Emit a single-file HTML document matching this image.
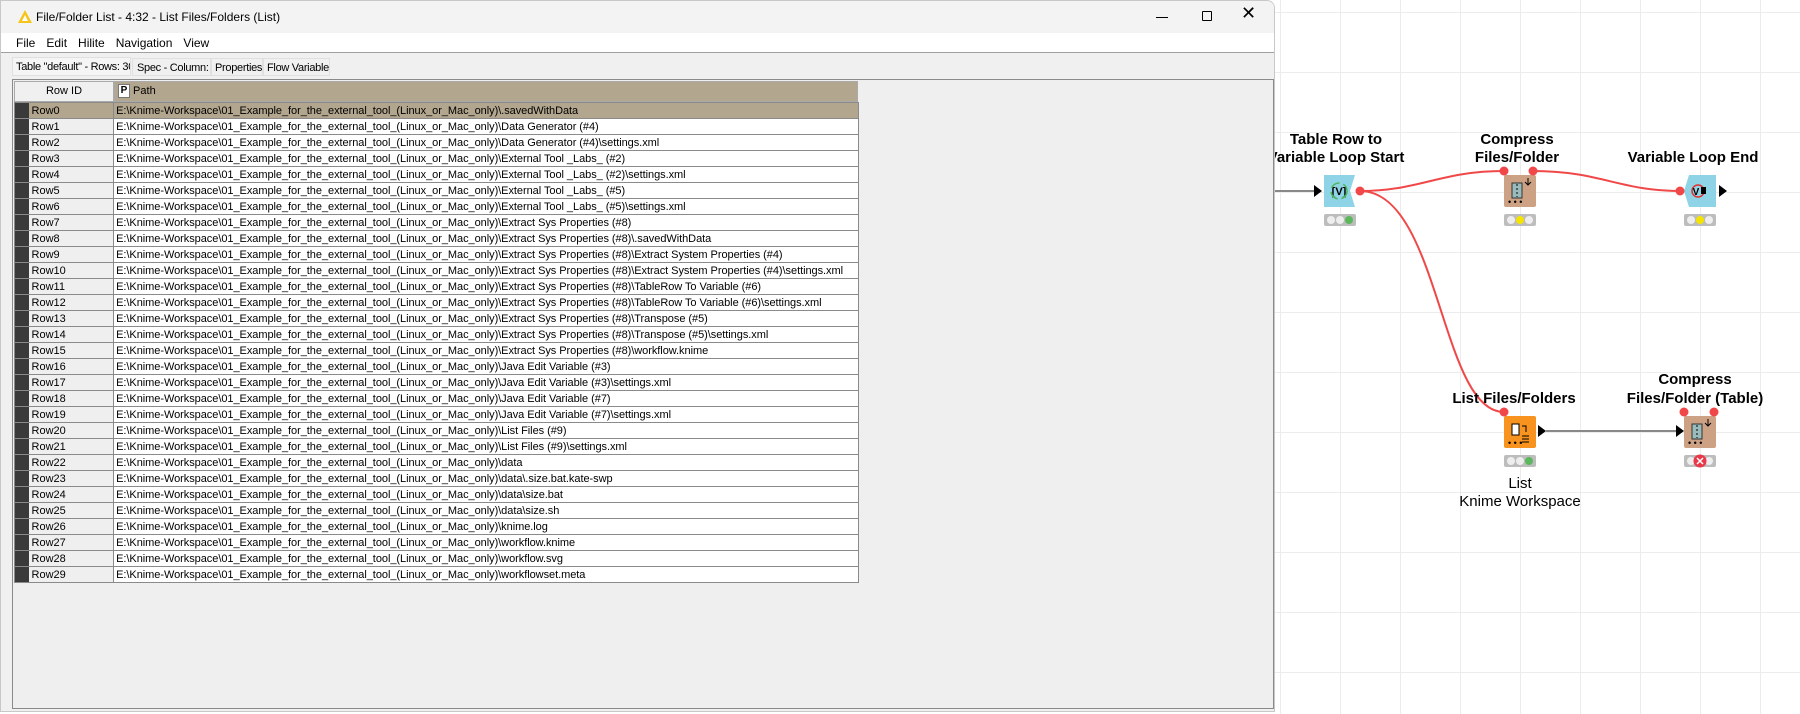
<!DOCTYPE html>
<html><head><meta charset="utf-8"><style>
*{margin:0;padding:0;box-sizing:border-box}
body{width:1800px;height:714px;position:relative;overflow:hidden;background:#fff;font-family:"Liberation Sans",sans-serif}
.abs{position:absolute}
#win{left:0;top:0;width:1275px;height:712px;background:#f0f0f0;border:1px solid #c8c8c8;border-radius:0 8px 0 0;overflow:hidden}
.menu span{margin-right:11px}
.tab{position:absolute;top:57px;height:18px;font-size:11px;line-height:18px;padding-left:4px;border:1px solid #e0e0e0;background:#f0f0f0;white-space:nowrap;overflow:hidden;letter-spacing:-0.3px}
table{border-collapse:collapse;font-size:11px;table-layout:fixed}
td{height:16px;border:1px solid #8a8a8a;padding:0 0 0 2px;white-space:nowrap;overflow:hidden;line-height:14px}
td.p{letter-spacing:-0.05px}
td.s{width:14px;background:#3a3a3a;border-right:none}
td.i{width:85px;background:#efefef;border-left:none;padding-left:3px}
td.p{width:744px;background:#fff}
tr.sel td.i,tr.sel td.p{background:#b3a68e}
.lbl{position:absolute;font-weight:bold;font-size:15px;text-align:center;white-space:nowrap;color:#000;line-height:18px}
</style></head><body>
<svg class="abs" style="left:0;top:0" width="1800" height="714">
<g stroke="#ececec" stroke-width="1">
<line x1="1280.5" y1="0" x2="1280.5" y2="714"/><line x1="1340.5" y1="0" x2="1340.5" y2="714"/><line x1="1400.5" y1="0" x2="1400.5" y2="714"/><line x1="1460.5" y1="0" x2="1460.5" y2="714"/><line x1="1520.5" y1="0" x2="1520.5" y2="714"/><line x1="1580.5" y1="0" x2="1580.5" y2="714"/><line x1="1640.5" y1="0" x2="1640.5" y2="714"/><line x1="1700.5" y1="0" x2="1700.5" y2="714"/><line x1="1760.5" y1="0" x2="1760.5" y2="714"/>
<line x1="0" y1="12.5" x2="1800" y2="12.5"/><line x1="0" y1="72.5" x2="1800" y2="72.5"/><line x1="0" y1="132.5" x2="1800" y2="132.5"/><line x1="0" y1="192.5" x2="1800" y2="192.5"/><line x1="0" y1="252.5" x2="1800" y2="252.5"/><line x1="0" y1="312.5" x2="1800" y2="312.5"/><line x1="0" y1="372.5" x2="1800" y2="372.5"/><line x1="0" y1="432.5" x2="1800" y2="432.5"/><line x1="0" y1="492.5" x2="1800" y2="492.5"/><line x1="0" y1="552.5" x2="1800" y2="552.5"/><line x1="0" y1="612.5" x2="1800" y2="612.5"/><line x1="0" y1="672.5" x2="1800" y2="672.5"/>
</g>
<line x1="1270" y1="191" x2="1316" y2="191" stroke="#888" stroke-width="2"/>
<polygon points="1314,185 1322,191 1314,197" fill="#000"/>
<path d="M1324,175 H1355 L1350,191 L1355,207 H1324 Z" fill="#8ed4e6"/>
<text x="1339" y="195" font-size="11" font-weight="bold" text-anchor="middle" font-family="Liberation Sans">[V]</text>
<circle cx="1339" cy="191" r="8" fill="none" stroke="#4cb85a" stroke-width="1.5" stroke-dasharray="10 4"/>
<rect x="1324" y="214" width="32" height="12" rx="2" fill="#bdbdbd"/><circle cx="1331" cy="220" r="4" fill="#eee"/><circle cx="1340" cy="220" r="4" fill="#eee"/><circle cx="1349" cy="220" r="4" fill="#5cb85c"/>
<g fill="none" stroke="#f04848" stroke-width="2">
<path d="M1360,191 C1420,191 1440,171 1504,171"/>
<path d="M1360,191 C1440,191 1440,412 1504,412"/>
<path d="M1533,171 C1600,171 1620,191 1680,191"/>
</g>
<circle cx="1360" cy="191" r="4.5" fill="#f04848"/>
<rect x="1504" y="175" width="32" height="32" rx="2" fill="#cda184"/>
<rect x="1512" y="183" width="10" height="15" fill="#9bb" stroke="#333" stroke-width="1"/><path d="M1517,184 v13" stroke="#000" stroke-dasharray="2 2"/><path d="M1528,178 v7 M1525,182 l3,3 3,-3" stroke="#000" fill="none"/>
<text x="1508" y="205" font-size="9" fill="#000">• • •</text>
<circle cx="1504" cy="171" r="4.5" fill="#f04848"/><circle cx="1533" cy="171" r="4.5" fill="#f04848"/>
<rect x="1504" y="214" width="32" height="12" rx="2" fill="#bdbdbd"/><circle cx="1511" cy="220" r="4" fill="#eee"/><circle cx="1520" cy="220" r="4" fill="#f5e400"/><circle cx="1529" cy="220" r="4" fill="#eee"/>
<path d="M1689,175 H1716 V207 H1689 L1684,191 Z" fill="#8ed4e6"/>
<circle cx="1698" cy="191" r="6" fill="none" stroke="#e03030" stroke-width="1.5"/><text x="1696" y="195" font-size="10" font-weight="bold" text-anchor="middle">V</text><rect x="1701" y="187" width="5" height="7" fill="#000"/>
<circle cx="1680" cy="191" r="4.5" fill="#f04848"/>
<polygon points="1719,185 1727,191 1719,197" fill="#000"/>
<rect x="1684" y="214" width="32" height="12" rx="2" fill="#bdbdbd"/><circle cx="1691" cy="220" r="4" fill="#eee"/><circle cx="1700" cy="220" r="4" fill="#f5e400"/><circle cx="1709" cy="220" r="4" fill="#eee"/>
<rect x="1504" y="416" width="32" height="32" rx="2" fill="#f7931e"/>
<rect x="1512" y="424" width="7" height="11" fill="#fff" stroke="#000"/><path d="M1522,426 h4 v6 M1522,436 h7 M1522,439 h7 M1522,442 h7" stroke="#000" fill="none"/>
<text x="1508" y="446" font-size="9">• • •</text>
<circle cx="1504" cy="412" r="4.5" fill="#f04848"/>
<polygon points="1538,425 1546,431 1538,437" fill="#000"/>
<line x1="1546" y1="431" x2="1678" y2="431" stroke="#888" stroke-width="2"/>
<polygon points="1676,425 1684,431 1676,437" fill="#000"/>
<rect x="1504" y="455" width="32" height="12" rx="2" fill="#bdbdbd"/><circle cx="1511" cy="461" r="4" fill="#eee"/><circle cx="1520" cy="461" r="4" fill="#eee"/><circle cx="1529" cy="461" r="4" fill="#5cb85c"/>
<rect x="1684" y="416" width="32" height="32" rx="2" fill="#cda184"/>
<rect x="1692" y="424" width="10" height="15" fill="#9bb" stroke="#333"/><path d="M1697,425 v13" stroke="#000" stroke-dasharray="2 2"/><path d="M1708,419 v7 M1705,423 l3,3 3,-3" stroke="#000" fill="none"/>
<text x="1688" y="446" font-size="9">• • •</text>
<circle cx="1684" cy="412" r="4.5" fill="#f04848"/><circle cx="1714" cy="412" r="4.5" fill="#f04848"/>
<rect x="1684" y="455" width="32" height="12" rx="2" fill="#bdbdbd"/><circle cx="1691" cy="461" r="4" fill="#eee"/><circle cx="1709" cy="461" r="4" fill="#eee"/>
<circle cx="1700" cy="461" r="6.5" fill="#e8384a"/><path d="M1697,458 l6,6 M1703,458 l-6,6" stroke="#fff" stroke-width="1.5"/>
</svg>
<div class="lbl" style="left:1276px;top:131px;width:120px">Table Row to</div>
<div class="lbl" style="left:1246px;top:149px;width:180px">Variable Loop Start</div>
<div class="lbl" style="left:1457px;top:131px;width:120px">Compress</div>
<div class="lbl" style="left:1457px;top:149px;width:120px">Files/Folder</div>
<div class="lbl" style="left:1613px;top:149px;width:160px">Variable Loop End</div>
<div class="lbl" style="left:1444px;top:390px;width:140px">List Files/Folders</div>
<div class="lbl" style="left:1620px;top:371px;width:150px">Compress</div>
<div class="lbl" style="left:1610px;top:390px;width:170px">Files/Folder (Table)</div>
<div class="abs" style="left:1440px;top:475px;width:160px;text-align:center;font-size:15px;line-height:18px">List<br>Knime Workspace</div>

<div id="win" class="abs">
 <div class="abs" style="left:0;top:0;width:1275px;height:32px;background:#f3f3f3"></div>
 <svg class="abs" style="left:16px;top:8px" width="16" height="15"><polygon points="8,1 15,14 1,14" fill="#f5c518"/><polygon points="8,6 11,12 5,12" fill="#fff"/></svg>
 <div class="abs" style="left:35px;top:9px;font-size:12px">File/Folder List - 4:32 - List Files/Folders (List)</div>
 <div class="abs" style="left:1155px;top:16px;width:12px;height:1px;background:#000"></div>
 <div class="abs" style="left:1201px;top:10px;width:10px;height:10px;border:1px solid #000;border-radius:1px"></div>
 <div class="abs" style="left:1240px;top:2px;font-size:18px;font-weight:300">✕</div>
 <div class="abs menu" style="left:0;top:32px;width:1275px;height:20px;background:#fff;border-bottom:1px solid #a0a0a0;font-size:12px;line-height:20px;padding-left:15px"><span>File</span><span>Edit</span><span>Hilite</span><span>Navigation</span><span>View</span></div>
 <div class="tab" style="left:11px;width:119px;top:56px;height:19px;background:#f5f5f5;padding-left:3px">Table "default" - Rows: 30</div>
 <div class="tab" style="left:131px;width:79px">Spec - Column: 1</div>
 <div class="tab" style="left:210px;width:52px;padding-left:3px">Properties</div>
 <div class="tab" style="left:262px;width:67px;padding-left:3px">Flow Variables</div>
 <div class="abs" style="left:11px;top:78px;width:1262px;height:630px;border:1px solid #8a8a8a;background:#efefef"></div>
 <div class="abs" style="left:13px;top:80px;width:100px;height:21px;background:#f0f0f0;border:1px solid #aaa;font-size:11px;text-align:center;line-height:19px">Row ID</div>
 <div class="abs" style="left:113px;top:80px;width:744px;height:21px;background:#b3a68e;border:1px solid #aaa;font-size:11px;line-height:19px;padding-left:3px"><span style="display:inline-block;width:12px;height:14px;background:#fff;border:1px solid #777;font-weight:bold;text-align:center;line-height:12px;font-size:10px;vertical-align:middle">P</span> Path</div>
 <table class="abs" style="left:13px;top:101px;width:845px">
<tr class="sel"><td class="s"></td><td class="i">Row0</td><td class="p">E:\Knime-Workspace\01_Example_for_the_external_tool_(Linux_or_Mac_only)\.savedWithData</td></tr>
<tr><td class="s"></td><td class="i">Row1</td><td class="p">E:\Knime-Workspace\01_Example_for_the_external_tool_(Linux_or_Mac_only)\Data Generator (#4)</td></tr>
<tr><td class="s"></td><td class="i">Row2</td><td class="p">E:\Knime-Workspace\01_Example_for_the_external_tool_(Linux_or_Mac_only)\Data Generator (#4)\settings.xml</td></tr>
<tr><td class="s"></td><td class="i">Row3</td><td class="p">E:\Knime-Workspace\01_Example_for_the_external_tool_(Linux_or_Mac_only)\External Tool _Labs_ (#2)</td></tr>
<tr><td class="s"></td><td class="i">Row4</td><td class="p">E:\Knime-Workspace\01_Example_for_the_external_tool_(Linux_or_Mac_only)\External Tool _Labs_ (#2)\settings.xml</td></tr>
<tr><td class="s"></td><td class="i">Row5</td><td class="p">E:\Knime-Workspace\01_Example_for_the_external_tool_(Linux_or_Mac_only)\External Tool _Labs_ (#5)</td></tr>
<tr><td class="s"></td><td class="i">Row6</td><td class="p">E:\Knime-Workspace\01_Example_for_the_external_tool_(Linux_or_Mac_only)\External Tool _Labs_ (#5)\settings.xml</td></tr>
<tr><td class="s"></td><td class="i">Row7</td><td class="p">E:\Knime-Workspace\01_Example_for_the_external_tool_(Linux_or_Mac_only)\Extract Sys Properties (#8)</td></tr>
<tr><td class="s"></td><td class="i">Row8</td><td class="p">E:\Knime-Workspace\01_Example_for_the_external_tool_(Linux_or_Mac_only)\Extract Sys Properties (#8)\.savedWithData</td></tr>
<tr><td class="s"></td><td class="i">Row9</td><td class="p">E:\Knime-Workspace\01_Example_for_the_external_tool_(Linux_or_Mac_only)\Extract Sys Properties (#8)\Extract System Properties (#4)</td></tr>
<tr><td class="s"></td><td class="i">Row10</td><td class="p">E:\Knime-Workspace\01_Example_for_the_external_tool_(Linux_or_Mac_only)\Extract Sys Properties (#8)\Extract System Properties (#4)\settings.xml</td></tr>
<tr><td class="s"></td><td class="i">Row11</td><td class="p">E:\Knime-Workspace\01_Example_for_the_external_tool_(Linux_or_Mac_only)\Extract Sys Properties (#8)\TableRow To Variable (#6)</td></tr>
<tr><td class="s"></td><td class="i">Row12</td><td class="p">E:\Knime-Workspace\01_Example_for_the_external_tool_(Linux_or_Mac_only)\Extract Sys Properties (#8)\TableRow To Variable (#6)\settings.xml</td></tr>
<tr><td class="s"></td><td class="i">Row13</td><td class="p">E:\Knime-Workspace\01_Example_for_the_external_tool_(Linux_or_Mac_only)\Extract Sys Properties (#8)\Transpose (#5)</td></tr>
<tr><td class="s"></td><td class="i">Row14</td><td class="p">E:\Knime-Workspace\01_Example_for_the_external_tool_(Linux_or_Mac_only)\Extract Sys Properties (#8)\Transpose (#5)\settings.xml</td></tr>
<tr><td class="s"></td><td class="i">Row15</td><td class="p">E:\Knime-Workspace\01_Example_for_the_external_tool_(Linux_or_Mac_only)\Extract Sys Properties (#8)\workflow.knime</td></tr>
<tr><td class="s"></td><td class="i">Row16</td><td class="p">E:\Knime-Workspace\01_Example_for_the_external_tool_(Linux_or_Mac_only)\Java Edit Variable (#3)</td></tr>
<tr><td class="s"></td><td class="i">Row17</td><td class="p">E:\Knime-Workspace\01_Example_for_the_external_tool_(Linux_or_Mac_only)\Java Edit Variable (#3)\settings.xml</td></tr>
<tr><td class="s"></td><td class="i">Row18</td><td class="p">E:\Knime-Workspace\01_Example_for_the_external_tool_(Linux_or_Mac_only)\Java Edit Variable (#7)</td></tr>
<tr><td class="s"></td><td class="i">Row19</td><td class="p">E:\Knime-Workspace\01_Example_for_the_external_tool_(Linux_or_Mac_only)\Java Edit Variable (#7)\settings.xml</td></tr>
<tr><td class="s"></td><td class="i">Row20</td><td class="p">E:\Knime-Workspace\01_Example_for_the_external_tool_(Linux_or_Mac_only)\List Files (#9)</td></tr>
<tr><td class="s"></td><td class="i">Row21</td><td class="p">E:\Knime-Workspace\01_Example_for_the_external_tool_(Linux_or_Mac_only)\List Files (#9)\settings.xml</td></tr>
<tr><td class="s"></td><td class="i">Row22</td><td class="p">E:\Knime-Workspace\01_Example_for_the_external_tool_(Linux_or_Mac_only)\data</td></tr>
<tr><td class="s"></td><td class="i">Row23</td><td class="p">E:\Knime-Workspace\01_Example_for_the_external_tool_(Linux_or_Mac_only)\data\.size.bat.kate-swp</td></tr>
<tr><td class="s"></td><td class="i">Row24</td><td class="p">E:\Knime-Workspace\01_Example_for_the_external_tool_(Linux_or_Mac_only)\data\size.bat</td></tr>
<tr><td class="s"></td><td class="i">Row25</td><td class="p">E:\Knime-Workspace\01_Example_for_the_external_tool_(Linux_or_Mac_only)\data\size.sh</td></tr>
<tr><td class="s"></td><td class="i">Row26</td><td class="p">E:\Knime-Workspace\01_Example_for_the_external_tool_(Linux_or_Mac_only)\knime.log</td></tr>
<tr><td class="s"></td><td class="i">Row27</td><td class="p">E:\Knime-Workspace\01_Example_for_the_external_tool_(Linux_or_Mac_only)\workflow.knime</td></tr>
<tr><td class="s"></td><td class="i">Row28</td><td class="p">E:\Knime-Workspace\01_Example_for_the_external_tool_(Linux_or_Mac_only)\workflow.svg</td></tr>
<tr><td class="s"></td><td class="i">Row29</td><td class="p">E:\Knime-Workspace\01_Example_for_the_external_tool_(Linux_or_Mac_only)\workflowset.meta</td></tr>
 </table>
</div>
</body></html>
